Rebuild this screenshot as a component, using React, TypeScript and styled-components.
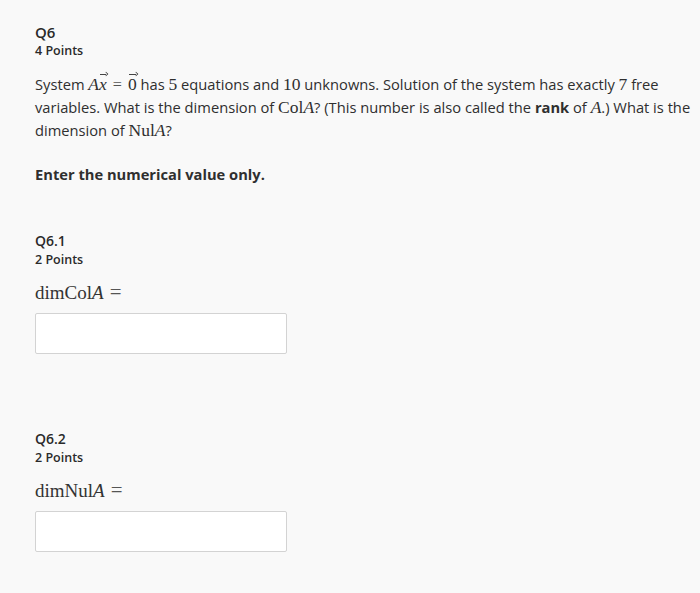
import styled, { createGlobalStyle } from 'styled-components';

const GlobalStyle = createGlobalStyle`
  html, body {
    margin: 0;
    padding: 0;
    background: #f9f9f9;
  }
  body {
    font-family: "Open Sans", "Noto Sans", sans-serif;
    color: #2f2f2f;
  }
`

const Page = styled.div`
  padding: 22px 8px 40px 35px;
  width: 700px;
  box-sizing: border-box;
  min-height: 593px;
`

const Question = styled.section<{ gap?: number }>`
  margin-top: ${props => props.gap ?? 0}px;
`

const Title = styled.h2<{ sub?: boolean }>`
  margin: 0;
  font-size: ${props => props.sub ? '14px' : '15px'};
  font-weight: 600;
  line-height: 20px;
  color: #2a2a2a;
`

const Points = styled.div`
  font-size: 12.5px;
  font-weight: 600;
  line-height: 17px;
  color: #2a2a2a;
`

const Body = styled.p`
  margin: 14px 0 0;
  font-size: 14.7px;
  line-height: 23px;
  b { font-weight: 700; }
`

const Instruction = styled.p`
  margin: 21px 0 0;
  font-size: 14.7px;
  font-weight: 700;
  line-height: 23px;
`

const Math = styled.span<{ italic?: boolean }>`
  font-family: "Liberation Serif", "DejaVu Serif", serif;
  font-size: 17.5px;
  font-style: ${props => props.italic ? 'italic' : 'normal'};
`

const Vec = styled.span`
  position: relative;
  display: inline-block;
  line-height: 1.1;
  &::after {
    content: '';
    position: absolute;
    left: 1px;
    right: -1px;
    top: -3px;
    height: 3px;
    background:
      linear-gradient(#444, #444) left 1.5px / calc(100% - 2px) 1px no-repeat;
  }
  &::before {
    content: '';
    position: absolute;
    right: -1px;
    top: -3px;
    width: 3px;
    height: 3px;
    border-top: 1px solid #444;
    border-right: 1px solid #444;
    transform: rotate(45deg) scale(0.8);
    transform-origin: center;
  }
`

const Op = styled.span`
  font-family: "Liberation Serif", "DejaVu Serif", serif;
  font-size: 1.1em;
  color: #555;
  margin: 0 6px;
`

const Label = styled.div`
  margin-top: 13px;
  font-family: "Liberation Serif", "DejaVu Serif", serif;
  font-size: 19px;
  line-height: 22px;
  color: #333;
  i { font-style: italic; }
`

const Input = styled.input`
  display: block;
  margin-top: 9px;
  width: 252px;
  height: 41px;
  box-sizing: border-box;
  border: 1px solid #d3d3d3;
  border-radius: 2px;
  background: #fff;
  outline: none;
`

const App = () => {
  return (
    <>
      <GlobalStyle />
      <Page>
        <Question>
          <Title>Q6</Title>
          <Points>4 Points</Points>
          <Body>
            System <Math italic>A<Vec>x</Vec></Math><Op>=</Op><Math><Vec>0</Vec></Math> has <Math>5</Math> equations and <Math>10</Math> unknowns. Solution of the system has exactly <Math>7</Math> free variables. What is the dimension of <Math>Col<i>A</i></Math>? (This number is also called the <b>rank</b> of <Math italic>A</Math>.) What is the dimension of <Math>Nul<i>A</i></Math>?
          </Body>
          <Instruction>Enter the numerical value only.</Instruction>
        </Question>

        <Question gap={45}>
          <Title sub>Q6.1</Title>
          <Points>2 Points</Points>
          <Label>dimCol<i>A</i><Op>=</Op></Label>
          <Input type="text" />
        </Question>

        <Question gap={75}>
          <Title sub>Q6.2</Title>
          <Points>2 Points</Points>
          <Label>dimNul<i>A</i><Op>=</Op></Label>
          <Input type="text" />
        </Question>
      </Page>
    </>
  )
}

export default App
